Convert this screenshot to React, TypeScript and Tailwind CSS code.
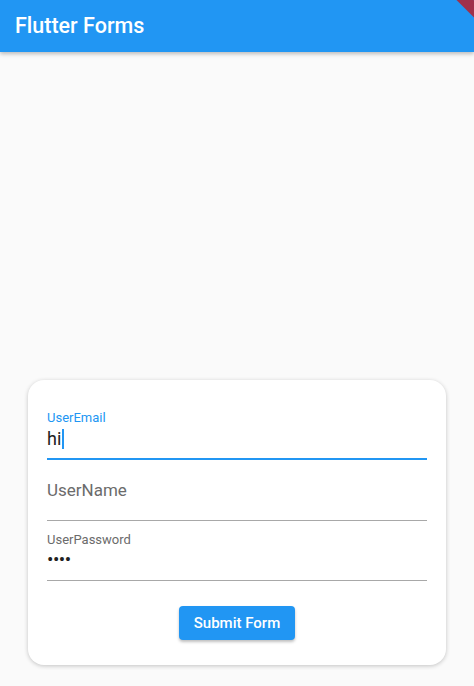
export default function App() {
  return (
    <div className="relative flex h-[686px] w-full flex-col overflow-hidden bg-[#fafafa] font-['Roboto',sans-serif]">
      {/* App bar */}
      <header className="relative z-10 flex h-[52px] shrink-0 items-center bg-[#2196f3] px-[15px] shadow-[0_2px_4px_rgba(0,0,0,0.25)]">
        <h1 className="text-[21.5px] font-medium leading-none text-white">Flutter Forms</h1>
      </header>

      {/* Debug banner corner */}
      <div className="absolute right-[-26px] top-[-6px] z-20 h-[12px] w-[70px] rotate-45 bg-[#a0304a]" />

      {/* Form card */}
      <main className="flex flex-1 flex-col justify-end pb-[21px]">
        <div className="mx-[28px] rounded-[16px] bg-white px-[19px] pb-[25px] pt-[31px] shadow-[0_1px_4px_rgba(0,0,0,0.22)]">
          {/* Email (focused) */}
          <div className="border-b-2 border-[#2196f3] pb-[8px]">
            <div className="text-[13px] leading-[14px] text-[#2196f3]">UserEmail</div>
            <div className="mt-[3px] flex h-[22px] items-center text-[18px] leading-[22px] text-[#212121]">
              hi
              <span className="ml-[1px] inline-block h-[20px] w-[2px] bg-[#2196f3]" />
            </div>
          </div>

          {/* Name */}
          <div className="border-b border-[#a8a8a8] py-[19px]">
            <div className="text-[17px] leading-[22px] text-[#6b6b6b]">UserName</div>
          </div>

          {/* Password */}
          <div className="border-b border-[#a8a8a8] pb-[11px] pt-[12px]">
            <div className="text-[13px] leading-[14px] text-[#6b6b6b]">UserPassword</div>
            <div className="mt-[4px] h-[18px] text-[19px] leading-[18px] tracking-[-0.5px] text-[#212121]">••••</div>
          </div>

          <div className="mt-[25px] flex justify-center">
            <button className="h-[34px] w-[116px] rounded-[4px] bg-[#2196f3] text-[15px] font-medium text-white shadow-[0_2px_3px_rgba(0,0,0,0.25)]">
              Submit Form
            </button>
          </div>
        </div>
      </main>
    </div>
  );
}
